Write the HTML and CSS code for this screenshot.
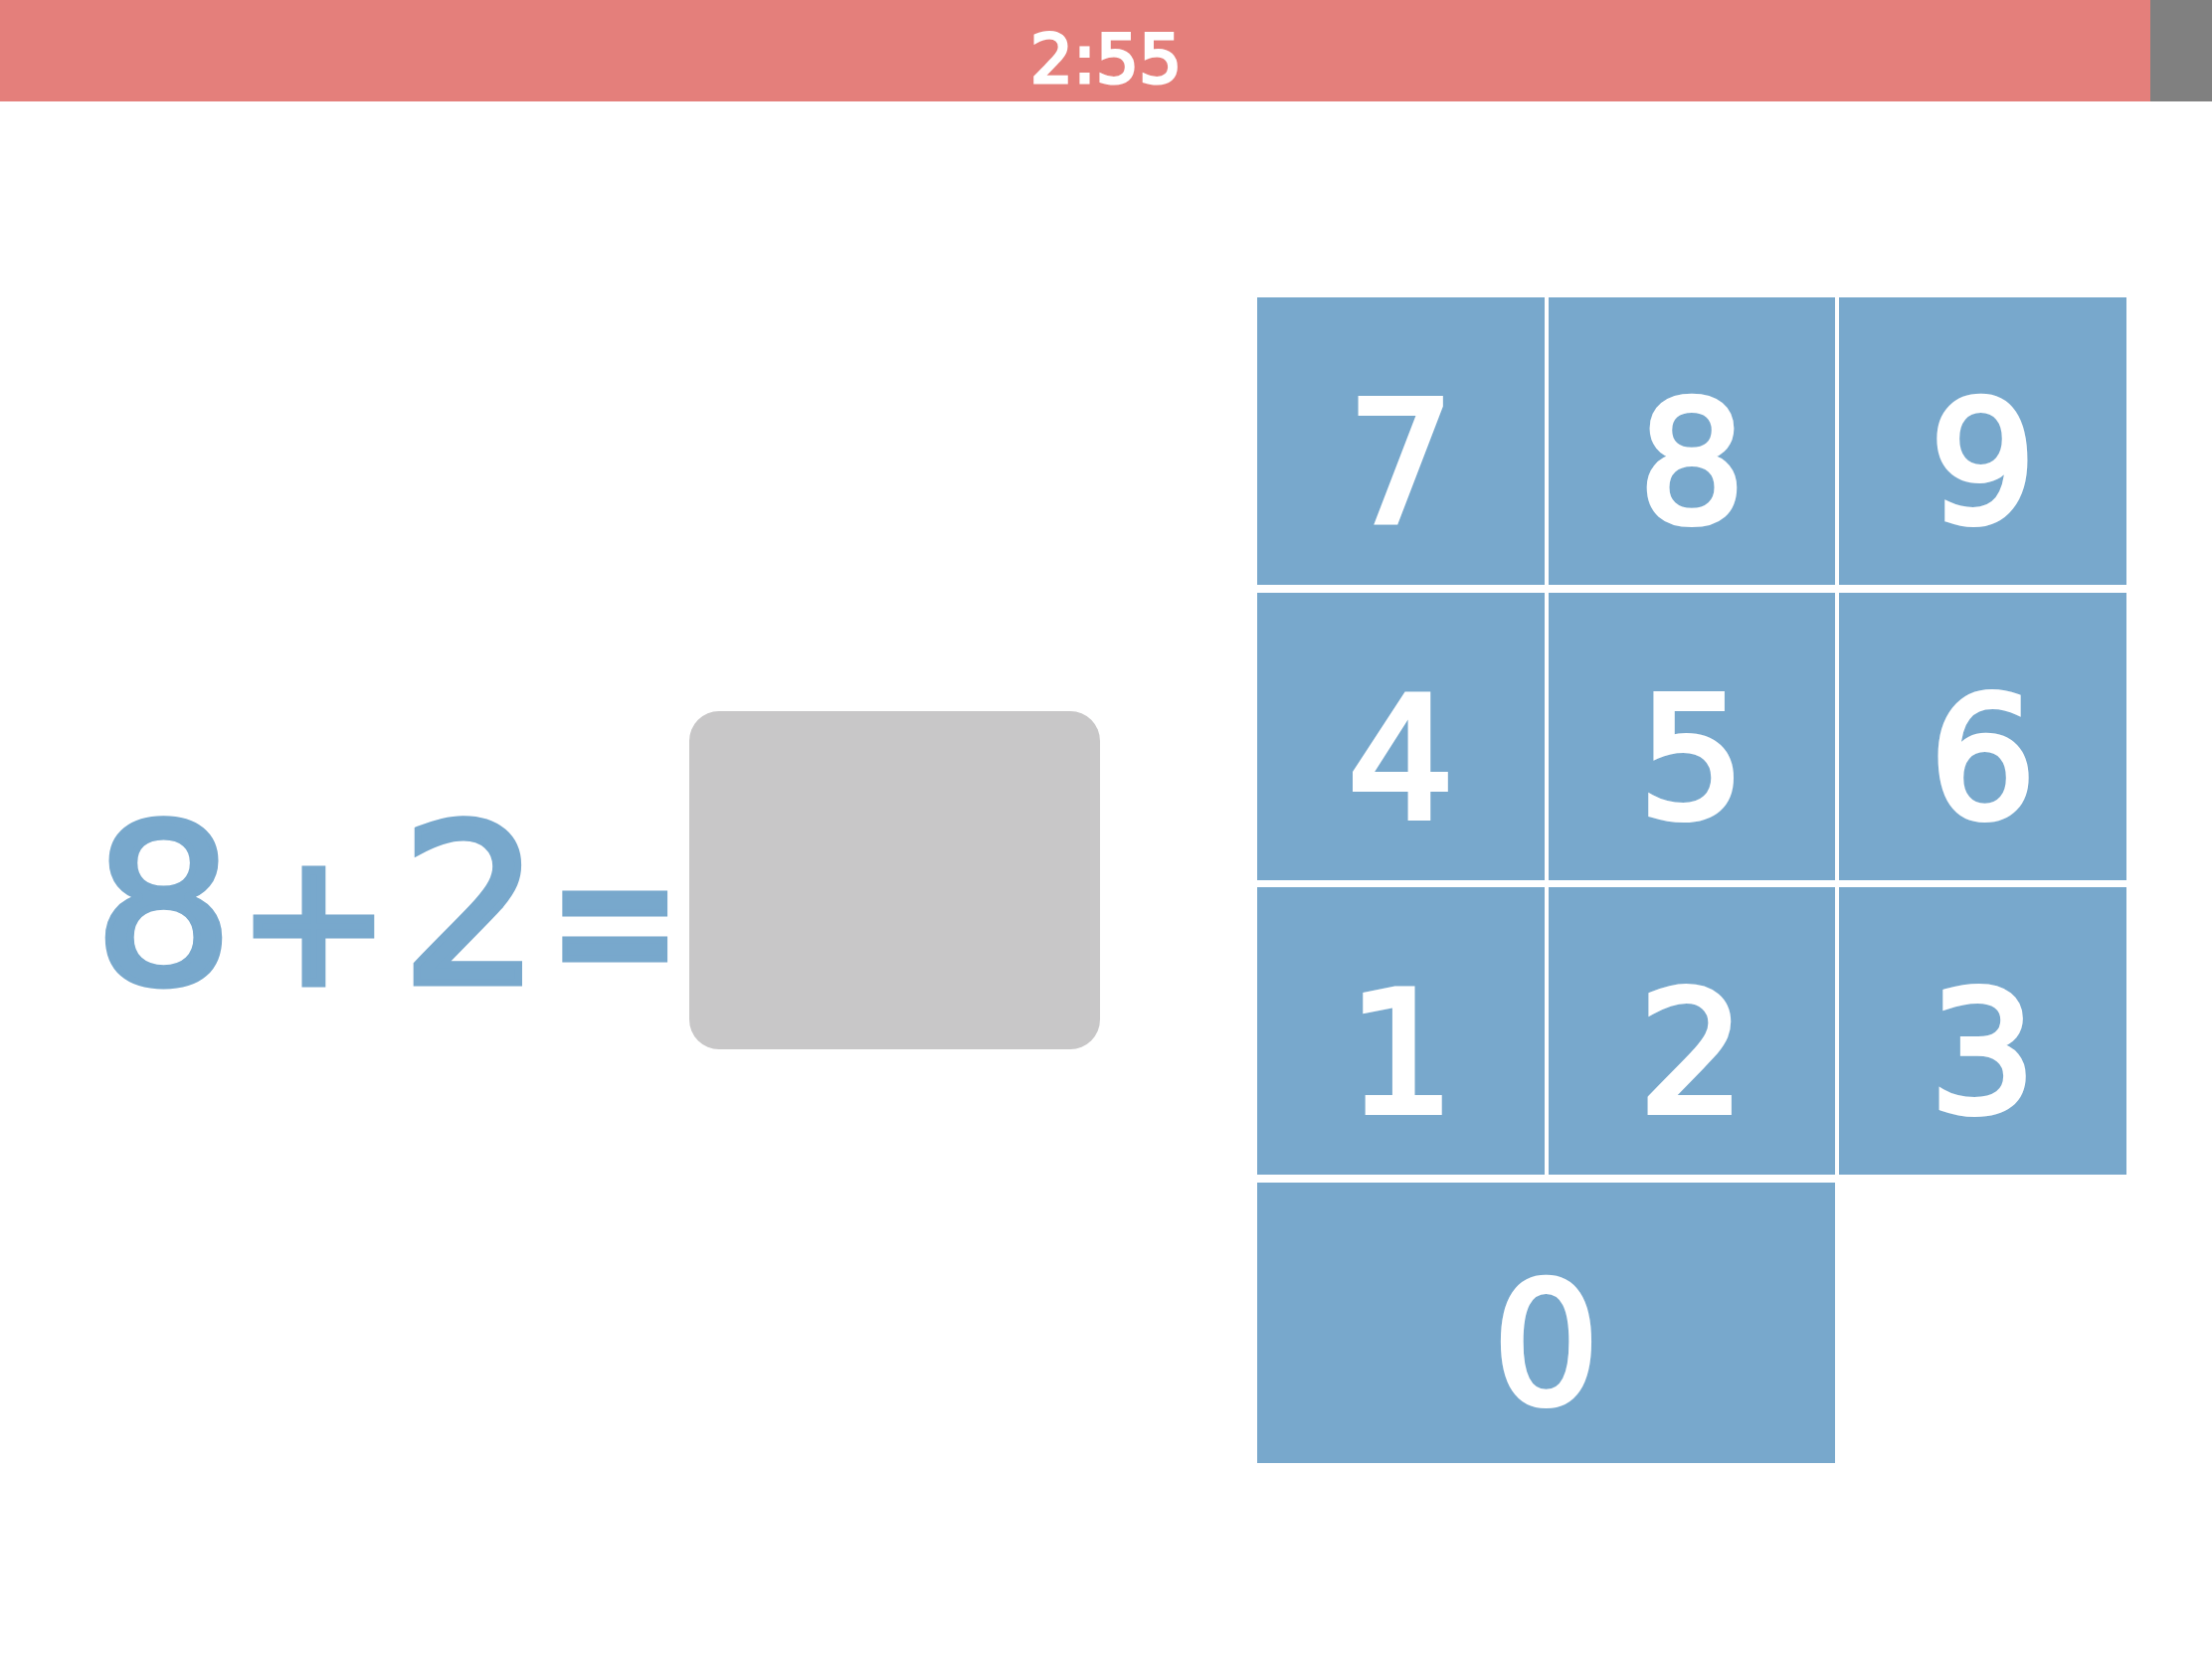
FILE: index.html
```html
<!DOCTYPE html>
<html>
<head>
<meta charset="utf-8">
<link rel="stylesheet" href="styles.css">
</head>
<body>
<header class="topbar">
  <div class="timer">2:55</div>
  <div class="side-block"></div>
</header>
<main class="stage">
  <section class="equation">
    <span class="sym">8</span>
    <span class="sym op-plus">+</span>
    <span class="sym sym-two">2</span>
    <span class="sym op-eq">=</span>
    <div class="answer"></div>
  </section>
  <section class="keypad">
    <button class="key">7</button>
    <button class="key">8</button>
    <button class="key">9</button>
    <button class="key">4</button>
    <button class="key">5</button>
    <button class="key">6</button>
    <button class="key">1</button>
    <button class="key">2</button>
    <button class="key">3</button>
    <button class="key key-wide">0</button>
  </section>
</main>
</body>
</html>
```
FILE: styles.css
```css
html, body {
  margin: 0;
  padding: 0;
  background: #ffffff;
}
body {
  width: 2224px;
  height: 1668px;
  overflow: hidden;
  font-family: "DejaVu Sans", sans-serif;
}
.topbar {
  height: 102px;
  background: #e47f7b;
  display: flex;
  position: relative;
}
.timer {
  flex: 1;
  display: flex;
  align-items: center;
  justify-content: center;
  padding-top: 17px;
  color: #ffffff;
  font-size: 68px;
  line-height: 1;
  -webkit-text-stroke: 3px #ffffff;
}
.side-block {
  position: absolute;
  right: 0;
  top: 0;
  width: 62px;
  height: 102px;
  background: #808080;
}
.stage {
  height: 1566px;
  display: flex;
  align-items: center;
}
.equation {
  display: flex;
  align-items: center;
  padding-left: 89px;
  width: 1106px;
  box-sizing: border-box;
}
.sym {
  width: 151px;
  box-sizing: border-box;
  text-align: center;
  color: #78a8cc;
  font-size: 221px;
  line-height: 1;
  margin-top: 52px;
  -webkit-text-stroke: 7px #78a8cc;
}
.sym-two {
  padding-left: 12px;
}
.op-plus {
  font-size: 180px;
  margin-top: 82px;
  -webkit-text-stroke: 9px #78a8cc;
}
.op-eq {
  font-size: 230px;
  margin-top: 79px;
  -webkit-text-stroke: 7px #78a8cc;
  transform: translateX(-14px) scaleX(0.7);
}
.answer {
  width: 413px;
  height: 340px;
  border-radius: 30px;
  background: #c8c7c8;
}
.keypad {
  margin-left: 158px;
  display: grid;
  grid-template-columns: 289px 288px 289px;
  grid-template-rows: 289px 289px 289px 282px;
  column-gap: 4px;
  row-gap: 7.5px;
}
.key {
  border: none;
  margin: 0;
  padding: 46px 0 0 0;
  background: #78a8cc;
  color: #ffffff;
  font-family: "DejaVu Sans", sans-serif;
  font-size: 169px;
  line-height: 1;
  display: flex;
  align-items: center;
  justify-content: center;
  -webkit-text-stroke: 6px #ffffff;
}
.key-wide {
  grid-column: 1 / span 2;
}
```
